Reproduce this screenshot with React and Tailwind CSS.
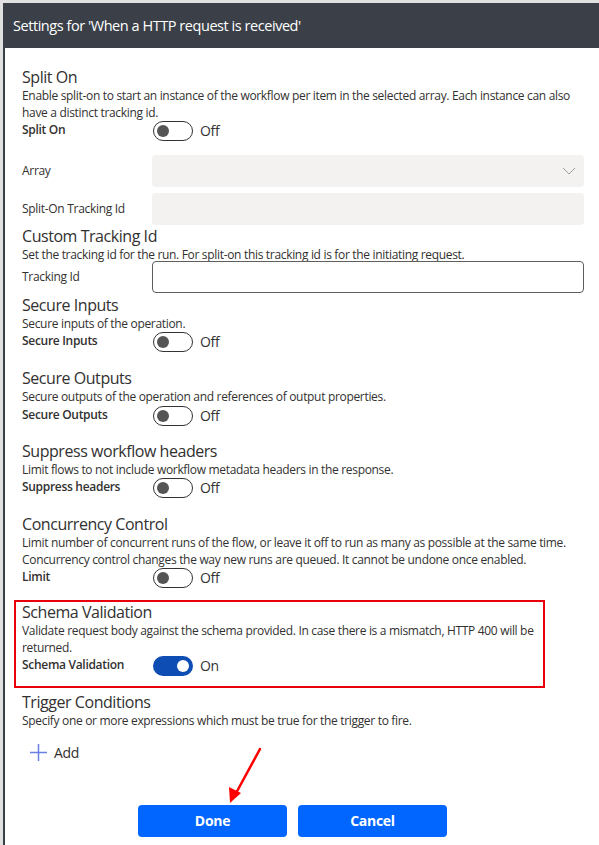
import React from 'react';

const font = { fontFamily: '"Open Sans", "Noto Sans", sans-serif' };

// Fluent-style toggle with "On"/"Off" caption
const Toggle = ({ on = false }) => (
  <div className="flex items-center gap-[7px]">
    {on ? (
      <div className="flex h-5 w-10 items-center justify-end rounded-full bg-[#0e4db3] px-[4px]">
        <div className="h-3 w-3 rounded-full bg-white" />
      </div>
    ) : (
      <div className="flex h-5 w-10 items-center rounded-full border border-[#333] px-[3px]">
        <div className="h-3 w-3 rounded-full bg-[#555]" />
      </div>
    )}
    <span className="text-[14px] leading-5 tracking-[-0.3px] text-[#333]">{on ? 'On' : 'Off'}</span>
  </div>
);

const Title = ({ children }) => (
  <div className="text-[16px] leading-[21px] tracking-[-0.45px] text-[#323130]">{children}</div>
);

const Desc = ({ lines }) => (
  <div className="text-[12px] leading-[16.5px] tracking-[-0.32px] text-[#323130]">
    {lines.map((l, i) => (
      <div key={i} className="whitespace-nowrap">{l}</div>
    ))}
  </div>
);

const Section = ({ title, lines, label, on, className = '' }) => (
  <div className={className}>
    <Title>{title}</Title>
    <Desc lines={lines} />
    {label && (
      <div className="flex items-start">
        <div className="w-[131px] pt-px text-[12px] font-semibold leading-4 tracking-[-0.3px] text-[#323130]">{label}</div>
        <Toggle on={on} />
      </div>
    )}
  </div>
);

const FieldRow = ({ label, children, className = '' }) => (
  <div className={`flex items-center ${className}`}>
    <div className="w-[130px] text-[12px] tracking-[-0.3px] text-[#323130]">{label}</div>
    <div className="flex-1">{children}</div>
  </div>
);

export default function App() {
  return (
    <div className="relative h-[845px] w-[599px] overflow-hidden bg-[#e1e1e1] pl-[3px] pt-[3px]" style={font}>
      <div className="flex h-[842px] flex-col border-l-2 border-[#3b4048] bg-white">
        {/* Header */}
        <div className="flex h-[45px] items-center bg-[#3b4048] pl-[8px] text-[14.5px] tracking-[-0.45px] text-white">
          Settings for 'When a HTTP request is received'
        </div>

        <div className="pl-[17px] pr-[15px] pt-[19px]">
          <Section
            title="Split On"
            lines={[
              'Enable split-on to start an instance of the workflow per item in the selected array. Each instance can also',
              'have a distinct tracking id.',
            ]}
            label="Split On"
          />

          <FieldRow label="Array" className="mt-[14px]">
            <div className="flex h-8 items-center justify-end rounded-sm bg-[#f3f2f1] pr-[8px]">
              <svg width="14" height="8" viewBox="0 0 14 8" fill="none">
                <path d="M1 1l6 6 6-6" stroke="#a19f9d" strokeWidth="1" />
              </svg>
            </div>
          </FieldRow>
          <FieldRow label="Split-On Tracking Id" className="mt-[6px]">
            <div className="h-8 rounded-sm bg-[#f3f2f1]" />
          </FieldRow>

          <div className="mt-px">
            <Title>Custom Tracking Id</Title>
            <Desc lines={['Set the tracking id for the run. For split-on this tracking id is for the initiating request.']} />
          </div>
          <FieldRow label="Tracking Id" className="mt-[-3px]">
            <div className="h-8 rounded-sm border border-[#605e5c] bg-white" />
          </FieldRow>

          <Section
            className="mt-[2px]"
            title="Secure Inputs"
            lines={['Secure inputs of the operation.']}
            label="Secure Inputs"
          />
          <Section
            className="mt-[16px]"
            title="Secure Outputs"
            lines={['Secure outputs of the operation and references of output properties.']}
            label="Secure Outputs"
          />
          <Section
            className="mt-[15px]"
            title="Suppress workflow headers"
            lines={['Limit flows to not include workflow metadata headers in the response.']}
            label="Suppress headers"
          />
          <Section
            className="mt-[16px]"
            title="Concurrency Control"
            lines={[
              'Limit number of concurrent runs of the flow, or leave it off to run as many as possible at the same time.',
              'Concurrency control changes the way new runs are queued. It cannot be undone once enabled.',
            ]}
            label="Limit"
          />

          <div className="ml-[-8px] mt-[12px] w-[531px] border-2 border-[#e8000b] pb-[10px] pl-[6px]">
            <Section
              title="Schema Validation"
              lines={[
                'Validate request body against the schema provided. In case there is a mismatch, HTTP 400 will be',
                'returned.',
              ]}
              label="Schema Validation"
              on
            />
          </div>

          <div className="mt-[4px]">
            <Title>Trigger Conditions</Title>
            <Desc lines={['Specify one or more expressions which must be true for the trigger to fire.']} />
          </div>

          <div className="mt-[12px] flex items-center gap-[7px] pl-[8px]">
            <svg width="17" height="17" viewBox="0 0 17 17">
              <path d="M8.5 0v17M0 8.5h17" stroke="#6a7fe6" strokeWidth="1.5" />
            </svg>
            <span className="text-[14px] tracking-[-0.3px] text-[#323130]">Add</span>
          </div>

          <div className="mt-[42px] flex gap-[11px] pl-[116px]">
            <button className="h-8 w-[149px] rounded-sm bg-[#0066ff] text-[14px] font-bold tracking-[-0.3px] text-white">Done</button>
            <button className="h-8 w-[149px] rounded-sm bg-[#0066ff] text-[14px] font-bold tracking-[-0.3px] text-white">Cancel</button>
          </div>
        </div>
      </div>

      {/* annotation arrow */}
      <svg className="pointer-events-none absolute left-0 top-0" width="599" height="845">
        <line x1="260" y1="749" x2="235" y2="795" stroke="#f00" strokeWidth="2.5" strokeLinecap="round" />
        <path d="M230 803 L229 787 L241 793 Z" fill="#f00" />
      </svg>
    </div>
  );
}
